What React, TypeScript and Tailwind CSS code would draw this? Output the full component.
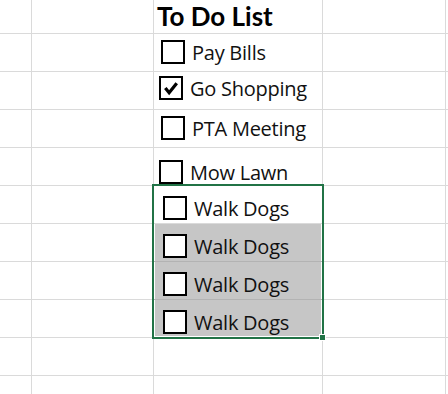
import React from "react";

type Item = {
  label: string;
  checked?: boolean;
  pos: string;
};

type Row = {
  height: string;
  heading?: boolean;
  item?: Item;
  shaded?: boolean;
  last?: boolean;
};

const rows: Row[] = [
  { height: "h-[34px]", heading: true },
  { height: "h-[38px]", item: { label: "Pay Bills", pos: "pl-[7px] pt-[6px]" } },
  { height: "h-[38px]", item: { label: "Go Shopping", checked: true, pos: "pl-[5px] pt-[4px]" } },
  { height: "h-[38px]", item: { label: "PTA Meeting", pos: "pl-[7px] pt-[6px]" } },
  { height: "h-[38px]", item: { label: "Mow Lawn", pos: "pl-[5px] pt-[12px]" } },
  { height: "h-[38px]", item: { label: "Walk Dogs", pos: "pl-[9px] pt-[10px]" } },
  { height: "h-[38px]", item: { label: "Walk Dogs", pos: "pl-[9px] pt-[10px]" }, shaded: true },
  { height: "h-[38px]", item: { label: "Walk Dogs", pos: "pl-[9px] pt-[10px]" }, shaded: true },
  { height: "h-[38px]", item: { label: "Walk Dogs", pos: "pl-[9px] pt-[10px]" }, shaded: true, last: true },
  { height: "h-[38px]" },
  { height: "h-[38px]" },
];

const CheckBox = ({ item }: { item: Item }) => (
  <div className="flex items-start gap-[7px]">
    <div className="w-6 h-6 border-[2.5px] border-black bg-white flex items-center justify-center shrink-0">
      {item.checked && (
        <svg width="19" height="19" viewBox="0 0 20 20">
          <path d="M3.5 9.5 L7.5 14.5 L15.5 4.5" fill="none" stroke="black" strokeWidth="3.4" strokeLinejoin="miter" />
        </svg>
      )}
    </div>
    <span
      className="leading-[24px] pt-[1px] text-[20px] tracking-[-0.25px] text-[#111] whitespace-nowrap"
      style={{ fontFamily: '"Open Sans", "Noto Sans", sans-serif' }}
    >
      {item.label}
    </span>
  </div>
);

export default function App() {
  return (
    <div className="relative w-[448px] h-[394px] overflow-hidden bg-white">
      {rows.map((row, i) => (
        <div key={i} className={`flex ${row.height}`}>
          <div className="w-[32px] shrink-0 border-r border-b border-[#dadada]" />
          <div className="w-[122px] shrink-0 border-r border-b border-[#dadada]" />
          <div
            className={`w-[169px] shrink-0 border-r border-b ${
              row.shaded
                ? row.last
                  ? "bg-[#c6c6c6] border-[#dadada] shadow-[inset_1px_0_0_white,inset_-1px_0_0_white,inset_0_-1px_0_white]"
                  : "bg-[#c6c6c6] border-b-[#b3b3b3] border-r-[#dadada] shadow-[inset_1px_0_0_white,inset_-1px_0_0_white]"
                : "border-[#dadada]"
            }`}
          >
            {row.heading && (
              <div
                className="pl-[3px] pt-[1px] text-[26px] font-bold leading-[30px] text-black"
                style={{ fontFamily: "Lato, sans-serif" }}
              >
                To Do List
              </div>
            )}
            {row.item && (
              <div className={row.item.pos}>
                <CheckBox item={row.item} />
              </div>
            )}
          </div>
          <div className="w-[123px] shrink-0 border-r border-b border-[#dadada]" />
          <div className="flex-1 border-b border-[#dadada]" />
        </div>
      ))}

      {/* selection box */}
      <div className="absolute left-[152px] top-[184px] w-[172px] h-[155px] border-2 border-[#217346] pointer-events-none" />
      <div className="absolute left-[319px] top-[334px] w-[7px] h-[7px] bg-[#217346] border border-white" />
    </div>
  );
}
